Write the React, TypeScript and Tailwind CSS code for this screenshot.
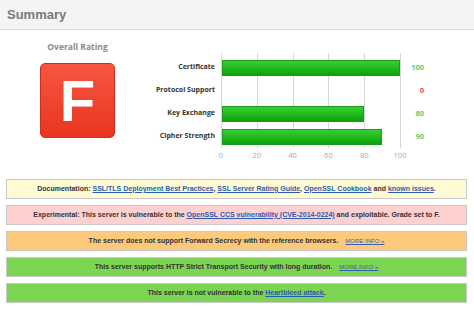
import React from "react";

const rows = [
  { label: "Certificate", value: 100 },
  { label: "Protocol Support", value: 0 },
  { label: "Key Exchange", value: 80 },
  { label: "Cipher Strength", value: 90 },
];

const ticks = [0, 20, 40, 60, 80, 100];

function Link({ children }: { children: React.ReactNode }) {
  return <span className="text-[#2a5db0] underline">{children}</span>;
}

function MoreInfo() {
  return (
    <span className="ml-[7px] text-[6px] font-normal text-[#3a5fb0] underline">MORE INFO »</span>
  );
}

function Notice({ bg, children }: { bg: string; children: React.ReactNode }) {
  return (
    <div
      className={`h-[20px] border border-[#c8c8c8] flex items-center justify-center text-[7px] font-bold text-[#333] ${bg}`}
    >
      <span>{children}</span>
    </div>
  );
}

export default function App() {
  return (
    <div className="w-[474px] h-[310px] bg-white overflow-hidden font-['Liberation_Sans',Arial,sans-serif]">
      <div className="h-[30px] bg-[#f4f4f4] border-b border-[#dadada] flex items-center px-[7px]">
        <h1 className="text-[13px] font-bold text-[#7a7a7a]">Summary</h1>
      </div>

      <div className="flex">
        {/* overall rating */}
        <div className="w-[155px] flex flex-col items-center pt-[12px]">
          <div className="font-['Open_Sans',sans-serif] text-[8.5px] leading-[10px] font-bold text-[#8a8a8a]">
            Overall Rating
          </div>
          <div className="mt-[11px] w-[75px] h-[75px] rounded-[5px] border border-[#c9301f] bg-gradient-to-b from-[#f7553f] to-[#e8341f] flex items-center justify-center">
            <span className="text-[58px] leading-none font-bold text-white">F</span>
          </div>
        </div>

        {/* chart */}
        <div className="mt-[23px] font-['Open_Sans',sans-serif]">
          <div className="flex">
            <div className="w-[60px] flex flex-col pt-[3px]">
              {rows.map((r) => (
                <div key={r.label} className="h-[23px] flex items-center justify-end text-[7px] font-bold text-[#333] whitespace-nowrap">
                  {r.label}
                </div>
              ))}
            </div>
            <div className="ml-[6px] w-[180px] h-[95px] relative pt-[3px]">
              {ticks.map((t) => (
                <div
                  key={t}
                  className="absolute top-0 bottom-0 w-px bg-[#d6d6d6]"
                  style={{ left: `${(t / 100) * 179}px` }}
                />
              ))}
              {rows.map((r) => (
                <div key={r.label} className="h-[23px] flex items-center pl-px relative">
                  {r.value > 0 && (
                    <div
                      className="h-[16px] bg-gradient-to-b from-[#35d030] to-[#0ba20b] border border-[#1a9a1a]"
                      style={{ width: `${(r.value / 100) * 178}px` }}
                    />
                  )}
                </div>
              ))}
            </div>
            <div className="w-[23px] flex flex-col pt-[3px]">
              {rows.map((r) => (
                <div
                  key={r.label}
                  className={`h-[23px] flex items-center justify-end text-[7.5px] font-bold ${
                    r.value === 0 ? "text-[#e8474b]" : "text-[#6cc86c]"
                  }`}
                >
                  {r.value}
                </div>
              ))}
            </div>
          </div>
          <div className="ml-[66px] w-[180px] h-[14px] relative">
            {ticks.map((t) => (
              <span
                key={t}
                className="absolute top-[2px] -translate-x-1/2 text-[7.5px] leading-[10px] text-[#aaa]"
                style={{ left: `${(t / 100) * 179}px` }}
              >
                {t}
              </span>
            ))}
          </div>
        </div>
      </div>

      <div className="mt-[17px] mx-[6px] w-[461px] flex flex-col gap-[6px]">
        <Notice bg="bg-[#fffbd4]">
          Documentation: <Link>SSL/TLS Deployment Best Practices</Link>, <Link>SSL Server Rating Guide</Link>,{" "}
          <Link>OpenSSL Cookbook</Link> and <Link>known issues</Link>.
        </Notice>
        <Notice bg="bg-[#ffd0d0]">
          Experimental: This server is vulnerable to the <Link>OpenSSL CCS vulnerability (CVE-2014-0224)</Link> and
          exploitable. Grade set to F.
        </Notice>
        <Notice bg="bg-[#fdc97b]">
          The server does not support Forward Secrecy with the reference browsers.
          <MoreInfo />
        </Notice>
        <Notice bg="bg-[#7bd452]">
          This server supports HTTP Strict Transport Security with long duration.
          <MoreInfo />
        </Notice>
        <Notice bg="bg-[#7bd452]">
          This server is not vulnerable to the <Link>Heartbleed attack</Link>.
        </Notice>
      </div>
    </div>
  );
}
